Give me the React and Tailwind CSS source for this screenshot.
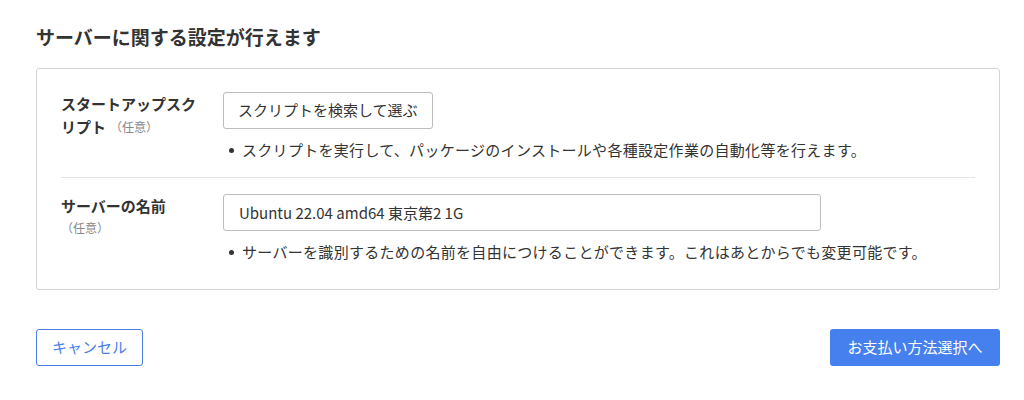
import { useState } from 'react';

const font = { fontFamily: '"Noto Sans CJK JP", "Noto Sans", sans-serif' };

function Row({ label, sub, subInline, children, note }) {
  return (
    <div className="flex">
      <div className="w-[162px] shrink-0 pr-[16px] text-[15px] leading-[23px] font-bold text-[#333]">
        {label}
        {subInline && <span className="ml-1 inline-block align-top text-[12px] leading-[24px] font-normal text-[#888]">（任意）</span>}
        {sub && <div className="text-[12px] font-normal text-[#888] leading-[22px]">（任意）</div>}
      </div>
      <div className="flex-1">
        {children}
        <ul className="mt-[10px] pl-[6px]">
          <li className="flex items-start gap-[8px] text-[15px] leading-[22px] tracking-[0.3px] text-[#333]">
            <span className="mt-[9px] h-[5px] w-[5px] shrink-0 rounded-full bg-[#333]" />
            <span>{note}</span>
          </li>
        </ul>
      </div>
    </div>
  );
}

export default function App() {
  const [name, setName] = useState('Ubuntu 22.04 amd64 東京第2 1G');

  return (
    <div className="min-h-[400px] bg-white pl-[36px] pr-[24px] pt-[24px]" style={font}>
      <h1 className="text-[19px] font-bold leading-[26px] text-[#333]">サーバーに関する設定が行えます</h1>

      <div className="mt-[18px] rounded-[3px] border border-[#d4d4d4] px-[24px] pt-[23px] pb-[26px]">
        <Row
          label="スタートアップスクリプト"
          subInline
          note="スクリプトを実行して、パッケージのインストールや各種設定作業の自動化等を行えます。"
        >
          <button className="h-[37px] rounded-[3px] border border-[#bdbdbd] bg-white px-[14px] text-[15px] text-[#333]">
            スクリプトを検索して選ぶ
          </button>
        </Row>

        <div className="my-[16px] border-t border-[#e5e5e5]" />

        <Row
          label="サーバーの名前"
          sub
          note="サーバーを識別するための名前を自由につけることができます。これはあとからでも変更可能です。"
        >
          <input
            value={name}
            onChange={(e) => setName(e.target.value)}
            className="h-[37px] w-[598px] rounded-[3px] border border-[#bdbdbd] px-[15px] text-[15px] text-[#333] outline-none"
            style={font}
          />
        </Row>
      </div>

      <div className="mt-[39px] flex items-center justify-between">
        <button className="h-[37px] w-[107px] rounded-[3px] border border-[#4a7fe8] bg-white text-[15px] text-[#4a7fe8]">
          キャンセル
        </button>
        <button className="h-[37px] w-[170px] rounded-[3px] bg-[#4680ee] text-[15px] text-white">
          お支払い方法選択へ
        </button>
      </div>
    </div>
  );
}
